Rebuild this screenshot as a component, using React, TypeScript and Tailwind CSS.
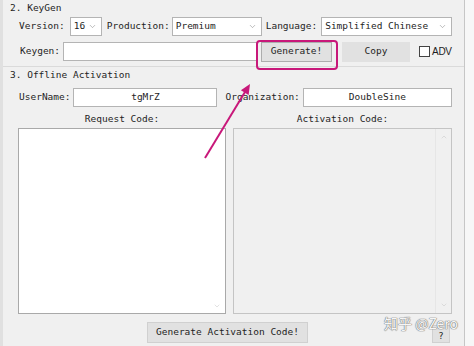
import { ChevronDown, ChevronUp } from "lucide-react";

function Select({ value, className }: { value: string; className: string }) {
  return (
    <div
      className={`flex h-[19px] items-center justify-between border border-[#b4b4b4] bg-white pl-[3px] pr-[4px] ${className}`}
    >
      <span className="whitespace-nowrap">{value}</span>
      <ChevronDown size={9} strokeWidth={1.5} className="text-[#8a8a8a]" />
    </div>
  );
}

function TextBox({ value, className }: { value?: string; className: string }) {
  return (
    <div
      className={`flex h-[19px] items-center justify-center border border-[#b4b4b4] bg-white ${className}`}
    >
      {value}
    </div>
  );
}

export default function App() {
  return (
    <div className="relative flex h-[346px] w-[474px] overflow-hidden bg-[#f0f0f0] font-['DejaVu_Sans_Mono',monospace] text-[9.5px] text-[#1e1e1e]">
      <div className="w-[3px] shrink-0 bg-[#e0e0e0]" />

      <div className="flex w-[461px] shrink-0 flex-col">
        {/* 2. KeyGen */}
        <div className="mt-[2px] h-[12px] pl-[7px] leading-[12px]">2. KeyGen</div>

        <div className="mt-[3px] flex h-[19px] items-center pl-[16px]">
          <span>Version:</span>
          <Select value="16" className="ml-[5px] w-[32px]" />
          <span className="ml-[5px]">Production:</span>
          <Select value="Premium" className="ml-[2px] w-[90px]" />
          <span className="ml-[4px]">Language:</span>
          <Select value="Simplified Chinese" className="ml-[4px] w-[131px]" />
        </div>

        <div className="mt-[6px] flex h-[19px] items-center pl-[17px]">
          <span>Keygen:</span>
          <TextBox className="ml-[3px] w-[194px]" />
          <button className="ml-[4px] h-[20px] w-[71px] border border-[#adadad] bg-[#e1e1e1]">
            Generate!
          </button>
          <button className="ml-[10px] h-[20px] w-[68px] border border-[#e1e1e1] bg-[#e1e1e1]">
            Copy
          </button>
          <div className="ml-[9px] h-[11px] w-[11px] border border-[#444] bg-white" />
          <span className="ml-[2px] font-['Liberation_Sans',sans-serif] text-[10px] tracking-[-0.3px]">
            ADV
          </span>
        </div>

        <div className="mt-[5px] h-[2px] border-t border-[#dadada] bg-[#f0f0f0]" />

        {/* 3. Offline Activation */}
        <div className="mt-[1px] h-[12px] pl-[7px] leading-[12px]">3. Offline Activation</div>

        <div className="mt-[7px] flex h-[19px] items-center pl-[16px]">
          <span>UserName:</span>
          <TextBox value="tgMrZ" className="ml-[3px] w-[144px]" />
          <span className="ml-[8px]">Organization:</span>
          <TextBox value="DoubleSine" className="ml-[3px] w-[149px]" />
        </div>

        <div className="mt-[6px] flex h-[12px] gap-[7px] pl-[15px] leading-[12px]">
          <div className="w-[208px] text-center">Request Code:</div>
          <div className="w-[219px] text-center">Activation Code:</div>
        </div>

        <div className="mt-[3px] flex h-[186px] gap-[7px] pl-[15px]">
          <div className="flex w-[208px] flex-col items-end justify-end border border-[#a9a9a9] bg-white pb-[3px] pr-[4px]">
            <ChevronDown size={8} strokeWidth={1.5} className="text-[#c4c4c4]" />
          </div>
          <div className="flex w-[219px] justify-end border border-[#c4c4c4] bg-[#f0f0f0]">
            <div className="flex w-[16px] flex-col items-center justify-between border-l border-[#e6e6e6] py-[4px]">
              <ChevronUp size={8} strokeWidth={1.5} className="text-[#c4c4c4]" />
              <ChevronDown size={8} strokeWidth={1.5} className="text-[#c4c4c4]" />
            </div>
          </div>
        </div>

        <div className="mt-[8px] flex h-[21px] items-start pl-[144px]">
          <button className="h-[21px] w-[161px] border border-[#d0d0d0] bg-[#e1e1e1]">
            Generate Activation Code!
          </button>
          <button className="ml-[124px] mt-[3px] h-[18px] w-[18px] border border-[#d0d0d0] bg-[#e1e1e1] pt-[4px] text-[9px] leading-[12px]">
            ?
          </button>
        </div>
      </div>

      <div className="w-[10px] shrink-0 border-l border-[#c6c6c6] bg-[#f7f7f7]" />

      {/* annotation overlay */}
      <svg className="pointer-events-none absolute left-0 top-0" width="474" height="346">
        <rect x="257" y="41" width="80" height="28" rx="3" fill="none" stroke="#c8187a" strokeWidth="2" />
        <line x1="205" y1="158" x2="245" y2="92" stroke="#c8187a" strokeWidth="2" />
        <polygon points="250,84 248.6,95 240.9,90.3" fill="#c8187a" />
      </svg>

      <div className="pointer-events-none absolute left-[384px] top-[315px] font-['Noto_Sans_CJK_SC',sans-serif] text-[14px] leading-[16px] text-[#f6f6f6] [text-shadow:0_0_1px_#7a7a7a,0_0_1px_#7a7a7a,0_0_1px_#7a7a7a]">
        知乎 @Zero
      </div>
    </div>
  );
}
